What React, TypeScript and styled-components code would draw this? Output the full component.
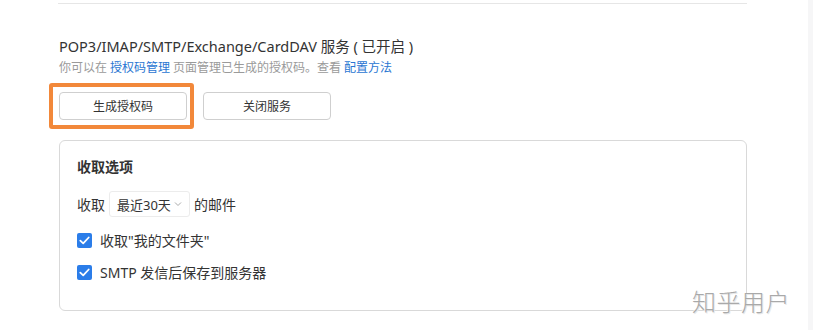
import React from "react";
import styled, { createGlobalStyle } from "styled-components";

const Global = createGlobalStyle`
  html, body { margin: 0; padding: 0; background: #fff; }
  body { font-family: "Noto Sans", "Noto Sans CJK SC", sans-serif; color: #333; }
  * { box-sizing: border-box; }
`;

const Page = styled.div`
  width: 813px;
  height: 330px;
  display: flex;
  position: relative;
  overflow: hidden;
  background: #fff;
`;

const Main = styled.div`
  flex: 1;
  padding: 3px 61px 0 59px;
  display: flex;
  flex-direction: column;
`;

const Scrollbar = styled.div`
  width: 5px;
  background: #f6f6f7;
`;

const Divider = styled.div`
  height: 1px;
  background: #e6e6e6;
  margin-left: -1px;
`;

const Title = styled.div`
  margin-top: 31px;
  font-size: 14.5px;
  line-height: 22px;
  color: #333;
`;

const Sub = styled.div`
  margin-top: 2px;
  font-size: 12px;
  line-height: 18px;
  color: #9a9a9a;
`;

const Link = styled.a`
  color: #2a76d2;
  text-decoration: none;
  margin: 0 3px;
`;

const Buttons = styled.div`
  margin-top: 15px;
  display: flex;
  gap: 16px;
`;

const ButtonWrap = styled.div`
  position: relative;
`;

const Button = styled.button`
  width: 128px;
  height: 28px;
  border: 1px solid #cfcfcf;
  border-radius: 4px;
  background: #fff;
  font-family: inherit;
  font-size: 12px;
  color: #333;
  padding: 0;
  cursor: pointer;
`;

const Highlight = styled.div`
  position: absolute;
  left: -10px;
  top: -9px;
  width: 145px;
  height: 46px;
  border: 4px solid #f2883a;
  border-radius: 3px;
  pointer-events: none;
`;

const Card = styled.div`
  margin-top: 20px;
  height: 171px;
  border: 1px solid #d9d9d9;
  border-radius: 6px;
  padding: 16px 17px;
  display: flex;
  flex-direction: column;
`;

const CardTitle = styled.div`
  font-size: 14px;
  line-height: 20px;
  font-weight: 700;
  color: #333;
`;

const Row = styled.div<{ $mt: number; $gap: number }>`
  margin-top: ${(p) => p.$mt}px;
  display: flex;
  align-items: center;
  font-size: 14px;
  color: #333;
  gap: ${(p) => p.$gap}px;
`;

const Select = styled.div`
  width: 81px;
  height: 26px;
  border: 1px solid #ececec;
  border-radius: 3px;
  display: flex;
  align-items: center;
  padding-left: 7px;
  gap: 3px;
  font-size: 13px;
  color: #333;
`;

const Check = styled.span`
  width: 15px;
  height: 15px;
  border-radius: 2px;
  background: #2b7de9;
  display: inline-flex;
  align-items: center;
  justify-content: center;
  margin-right: 2px;
`;

const Watermark = styled.div`
  position: absolute;
  left: 692px;
  top: 287px;
  font-size: 24px;
  line-height: 28px;
  color: #a9a9a9;
  letter-spacing: 0.5px;
  text-shadow: 1px 1px 0 #e8e8e8, -1px 0 0 rgba(255,255,255,0.8);
  font-family: "Noto Sans CJK SC", sans-serif;
  font-weight: 300;
`;

const Tick = () => (
  <svg width="11" height="9" viewBox="0 0 11 9">
    <path d="M1.3 4.6 L4.2 7.3 L9.7 1.5" fill="none" stroke="#fff" strokeWidth="1.8" strokeLinecap="round" strokeLinejoin="round" />
  </svg>
);

const Chevron = () => (
  <svg width="8" height="6" viewBox="0 0 8 6">
    <path d="M1 1.5 L4 4.5 L7 1.5" fill="none" stroke="#aaa" strokeWidth="1" />
  </svg>
);

export default function App() {
  return (
    <Page>
      <Global />
      <Main>
        <Divider />
        <Title>POP3/IMAP/SMTP/Exchange/CardDAV 服务 ( 已开启 )</Title>
        <Sub>
          你可以在<Link>授权码管理</Link>页面管理已生成的授权码。查看<Link>配置方法</Link>
        </Sub>
        <Buttons>
          <ButtonWrap>
            <Button>生成授权码</Button>
            <Highlight />
          </ButtonWrap>
          <ButtonWrap>
            <Button>关闭服务</Button>
          </ButtonWrap>
        </Buttons>
        <Card>
          <CardTitle>收取选项</CardTitle>
          <Row $mt={14} $gap={4}>
            收取
            <Select>
              最近30天 <Chevron />
            </Select>
            的邮件
          </Row>
          <Row $mt={13} $gap={6}>
            <Check><Tick /></Check>
            收取"我的文件夹"
          </Row>
          <Row $mt={12} $gap={6}>
            <Check><Tick /></Check>
            SMTP 发信后保存到服务器
          </Row>
        </Card>
      </Main>
      <Scrollbar />
      <Watermark>知乎用户</Watermark>
    </Page>
  );
}
